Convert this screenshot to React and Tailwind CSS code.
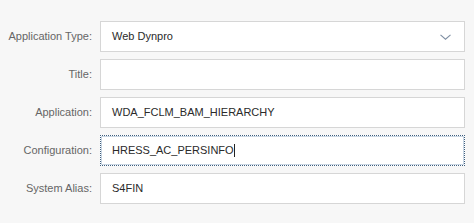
import React from "react";

const rows = [
  { label: "Application Type:", value: "Web Dynpro", select: true },
  { label: "Title:", value: "" },
  { label: "Application:", value: "WDA_FCLM_BAM_HIERARCHY" },
  { label: "Configuration:", value: "HRESS_AC_PERSINFO", focused: true },
  { label: "System Alias:", value: "S4FIN" },
];

function Chevron() {
  return (
    <svg width="11" height="6" viewBox="0 0 11 6" className="shrink-0">
      <path d="M0.5 0.8l5 4.4 5-4.4" fill="none" stroke="#7f8fa3" strokeWidth="1.1" />
    </svg>
  );
}

export default function App() {
  return (
    <div
      className="w-[474px] h-[223px] bg-[#f7f7f7] pt-[21px] flex flex-col gap-[7px]"
      style={{ fontFamily: '"Liberation Sans", Arial, sans-serif' }}
    >
      {rows.map((r) => (
        <div key={r.label} className="flex items-center">
          <div className="w-[92px] text-right text-[11px] text-[#666666]">{r.label}</div>
          <div
            className={
              "ml-[8px] w-[365px] h-[31px] bg-white flex items-center pl-[11px] pr-[13px] text-[11px] text-[#2a2a2a] " +
              (r.focused
                ? "border border-dotted border-[#3f5e7d] outline outline-1 outline-[#c9d6e3] -outline-offset-2"
                : "border border-[#d6d6d6]")
            }
          >
            <span className="flex-1">
              {r.value}
              {r.focused && <span className="inline-block w-px h-[13px] bg-[#222222] align-middle -mt-[2px]" />}
            </span>
            {r.select && <Chevron />}
          </div>
        </div>
      ))}
    </div>
  );
}
